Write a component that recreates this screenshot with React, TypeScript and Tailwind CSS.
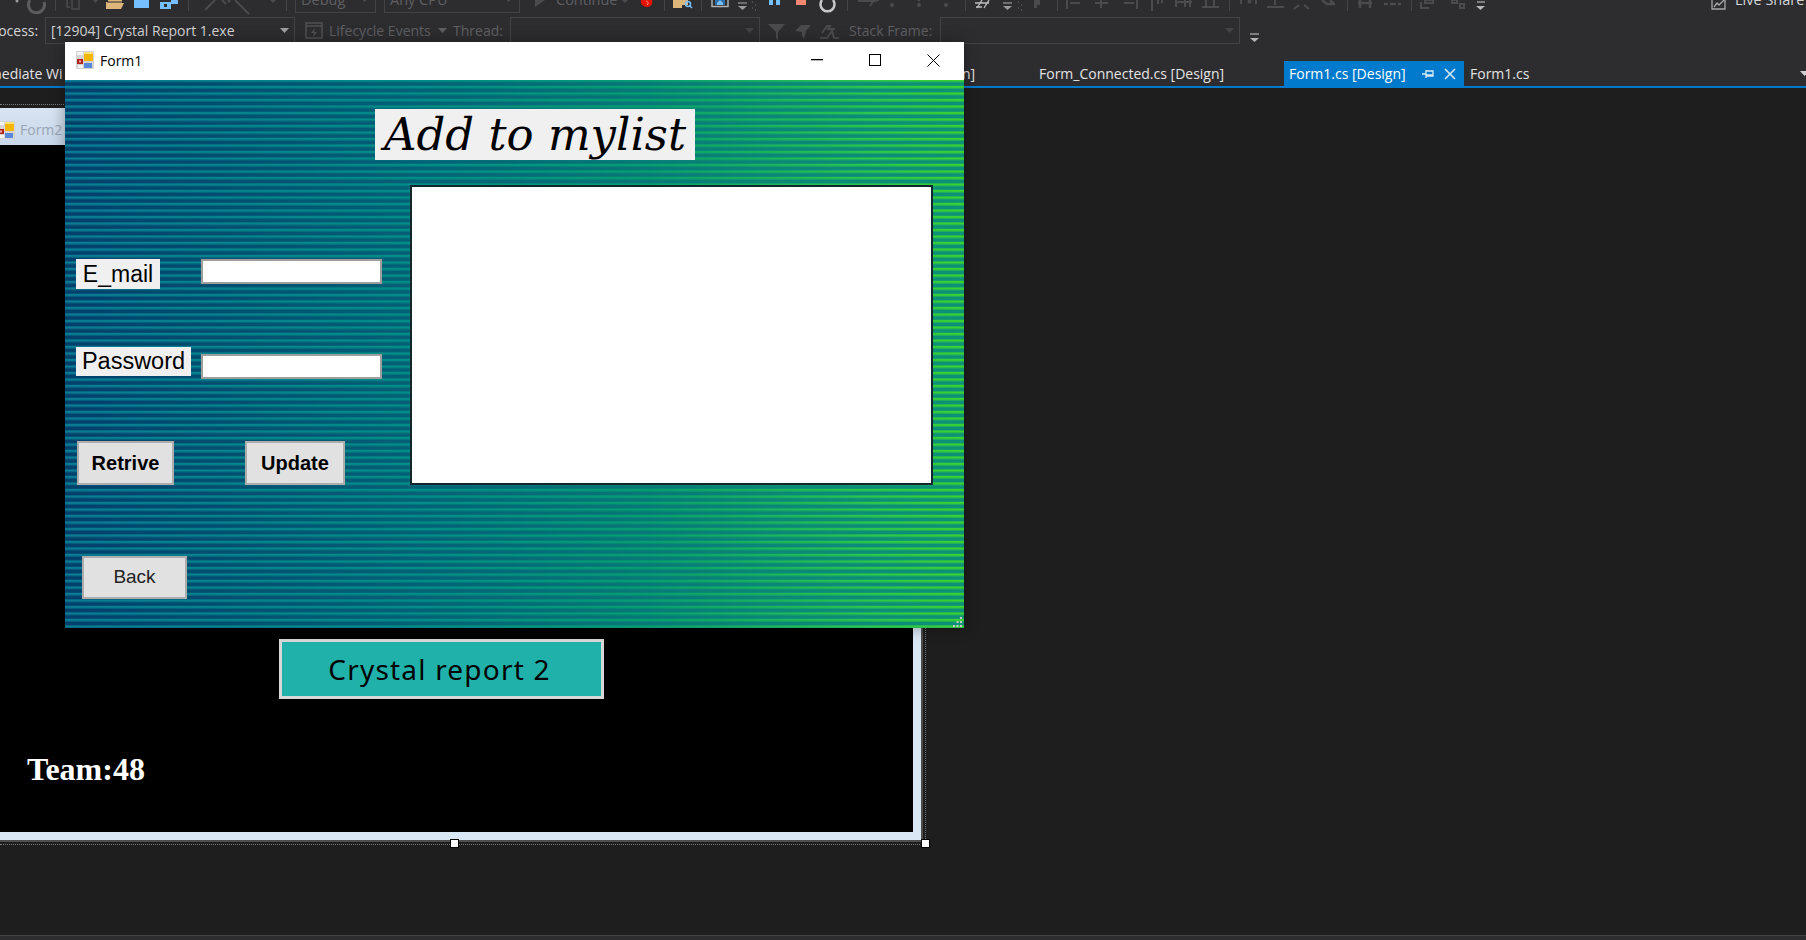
import React from 'react'

function FormIcon({ className }: { className?: string }) {
  return (
    <svg viewBox="0 0 18 18" className={className}>
      <rect width="18" height="18" fill="#d4d4d4" />
      <rect x="1" y="1" width="6" height="3" fill="#f4f4f4" />
      <rect x="1" y="8" width="6" height="5" fill="#b3201c" />
      <rect x="3" y="9.5" width="2" height="2" fill="#e9b0a0" />
      <rect x="8" y="1" width="9" height="9" fill="#f2b707" />
      <rect x="8" y="1" width="9" height="2" fill="#fde27a" />
      <rect x="8" y="12" width="8" height="5" fill="#5a88d8" />
      <rect x="2" y="14" width="5" height="3" fill="#f4f4f4" />
    </svg>
  )
}

function Caret({ color = '#9a9a9a', className = '' }: { color?: string; className?: string }) {
  return (
    <svg width="9" height="5" viewBox="0 0 9 5" className={className}>
      <path d="M0 0h9L4.5 5z" fill={color} />
    </svg>
  )
}

function DropBox({ width, caret, children }: { width: string; caret: string; children?: React.ReactNode }) {
  return (
    <div className={`flex h-[27px] items-center justify-between border border-[#434346] pl-[5px] pr-[5px] ${width}`}>
      <span className="text-[14px] leading-none whitespace-nowrap text-[#d4d4d4]">{children}</span>
      <Caret color={caret} />
    </div>
  )
}

function ToolbarTop() {
  const dim = '#4b4b4e'
  const sep = '#454548'
  return (
    <div className="flex h-[15px] items-start overflow-hidden">
      <svg width="295" height="15" viewBox="0 0 295 15" className="shrink-0">
        <circle cx="17" cy="1" r="1.5" fill="#9a9a9a" />
        <path d="M30 0a8 8 0 1 0 14 2" fill="none" stroke="#5c5c5f" strokeWidth="3" />
        <path d="M33 3l3 3 6-6" fill="none" stroke="#2d2d30" strokeWidth="2" />
        <rect x="55" y="0" width="1" height="11" fill={sep} />
        <path d="M67 0v7h3M72 0v9h7V0" fill="none" stroke={dim} strokeWidth="1.5" />
        <path d="M93 0h5l-2.500 3z" fill={dim} />
        <path d="M106 2h2V0h14v3h2l-3 6h-15z" fill="#dcb67a" />
        <path d="M107 2h16" stroke="#2d2d30" strokeWidth="1" />
        <rect x="134" y="0" width="15" height="8" fill="#75beff" />
        <rect x="160" y="2" width="11" height="7" fill="#75beff" />
        <rect x="171" y="0" width="7" height="4" fill="#75beff" />
        <rect x="164" y="4" width="3" height="3" fill="#2d2d30" />
        <rect x="188" y="0" width="1" height="11" fill={sep} />
        <path d="M205 10l10-10M222 0l4 4M235 0l14 14" fill="none" stroke={dim} strokeWidth="2" />
        <circle cx="229" cy="1" r="1.500" fill={dim} />
        <path d="M270 0h6l-3 3z" fill={dim} />
        <rect x="286" y="0" width="1" height="11" fill={sep} />
      </svg>
      <div className="-mt-[14px] flex h-[27px] w-[81px] shrink-0 items-center justify-between border border-[#434346] pl-[5px] pr-[6px] text-[14.500px] text-[#5f5f62]">
        Debug
        <Caret color="#4b4b4e" />
      </div>
      <div className="-mt-[14px] ml-[8px] flex h-[27px] w-[136px] shrink-0 items-center justify-between border border-[#434346] pl-[5px] pr-[6px] text-[14.500px] text-[#5f5f62]">
        Any CPU
        <Caret color="#4b4b4e" />
      </div>
      <svg width="20" height="15" viewBox="0 0 20 15" className="ml-[15px] shrink-0">
        <path d="M0 0h10L0 7z" fill={dim} />
      </svg>
      <span className="-mt-[14px] ml-[1px] h-[27px] w-[64px] shrink-0 text-[14.500px] leading-[27px] text-[#5f5f62]">Continue</span>
      <svg width="880" height="15" viewBox="620 0 880 15" className="shrink-0">
        <path d="M622 0h6l-3 3z" fill={dim} />
        <path d="M641 0h11c1 4-1 7-5 7s-7-3-6-7z" fill="#e51400" />
        <path d="M646 1c2 1 3 2 1 4" fill="none" stroke="#f6a6a0" />
        <rect x="664" y="0" width="1" height="11" fill={sep} />
        <path d="M673 0h15v5h-6v3h-9z" fill="#dcb67a" />
        <circle cx="688" cy="4" r="2.500" fill="none" stroke="#75beff" strokeWidth="1.500" />
        <path d="M690 6l2 2" stroke="#75beff" strokeWidth="1.500" />
        <rect x="701" y="0" width="1" height="11" fill={sep} />
        <path d="M712 0v6.500h16V0" fill="none" stroke="#b0b0b0" strokeWidth="1.500" />
        <path d="M715 0h10v5h-10z" fill="#2d6fa8" />
        <path d="M717 3l3-3 3 3v2h-6z" fill="#75beff" />
        <path d="M738 3h9" stroke="#9a9a9a" strokeWidth="1.200" />
        <path d="M738 6h9l-4.500 4z" fill="#9a9a9a" />
        <path d="M752 2h1M755 5h1M752 8h1M755 10h1" stroke="#5a5a5d" strokeWidth="1.500" />
        <rect x="769" y="0" width="4" height="5" fill="#75beff" />
        <rect x="776" y="0" width="4" height="5" fill="#75beff" />
        <rect x="796" y="0" width="10" height="5" fill="#f48771" />
        <path d="M822 0a7 7 0 1 0 11 0" fill="none" stroke="#c8c8c8" strokeWidth="2.500" />
        <rect x="847" y="0" width="1" height="11" fill={sep} />
        <path d="M858 1h16l5-1M874 0l-4 6" fill="none" stroke={dim} strokeWidth="2" />
        <circle cx="892" cy="5" r="2" fill={dim} />
        <circle cx="919" cy="5" r="2" fill={dim} />
        <circle cx="919" cy="0" r="1.500" fill={dim} />
        <circle cx="946" cy="5" r="2" fill={dim} />
        <rect x="965" y="0" width="1" height="11" fill={sep} />
        <path d="M977 8l5-8M984 8l5-8M975 3h14M976 7h6" fill="none" stroke="#bdbdbd" strokeWidth="1.300" />
        <path d="M1003 3h9" stroke="#9a9a9a" strokeWidth="1.200" />
        <path d="M1003 6h9l-4.500 4z" fill="#9a9a9a" />
        <path d="M1018 2h1M1021 5h1M1018 8h1M1021 10h1" stroke="#5a5a5d" strokeWidth="1.500" />
        <path d="M1034 0h6v5h-3v3h-3z" fill={dim} />
        <rect x="1057" y="0" width="1" height="11" fill={sep} />
        <path d="M1067 0v9M1070 3h10M1095 3h13M1101 0v8M1124 3h10M1137 0v9" fill="none" stroke={dim} strokeWidth="2" />
        <path d="M1152 0v11M1158 0v4M1162 0v3M1176 0v7M1185 0v7M1190 0v7M1175 2h17M1202 7h17M1206 0v6M1214 0v6" fill="none" stroke={dim} strokeWidth="2" />
        <rect x="1229" y="0" width="1" height="11" fill={sep} />
        <path d="M1241 0v4M1256 0v4M1248 0l3 3M1251 0l-3 3M1267 7h17M1275 0v5M1294 9l5-4M1309 9l-5-4" fill="none" stroke={dim} strokeWidth="2" />
        <path d="M1322 0l5 4h8M1330 0l4 4" fill="none" stroke={dim} strokeWidth="2.500" />
        <rect x="1347" y="0" width="1" height="11" fill={sep} />
        <path d="M1360 0v8M1370 0v8M1358 3h14M1384 4h4M1390 4h6M1398 4h3" fill="none" stroke={dim} strokeWidth="2.500" />
        <rect x="1411" y="0" width="1" height="11" fill={sep} />
        <path d="M1421 2v6h8M1425 0h8v3h-8z" fill="none" stroke={dim} strokeWidth="2" />
        <path d="M1452 0h5v3h-5zM1460 4h4v4h-4z" fill="none" stroke={dim} strokeWidth="2" />
        <path d="M1477 2h8" stroke="#b5b5b5" strokeWidth="1.200" />
        <path d="M1476 6h9l-4.500 4z" fill="#b5b5b5" />
      </svg>
      <svg width="15" height="10" viewBox="0 0 15 10" className="ml-[211px] shrink-0">
        <path d="M1 0v9h13V0M3 7l3-4 2 2 5-5" fill="none" stroke="#a8a8a8" strokeWidth="1.300" />
      </svg>
      <span className="-mt-[14px] ml-[9px] h-[27px] shrink-0 text-[14.500px] leading-[27px] whitespace-nowrap text-[#d4d4d4]">Live Share</span>
    </div>
  )
}

function ToolbarDebug() {
  return (
    <div className="mt-[2px] flex h-[44px] items-start text-[14px] text-[#5f5f62]">
      <span className="-ml-[16px] flex h-[27px] w-[61px] shrink-0 items-center text-[#d4d4d4]">Process:</span>
      <DropBox width="w-[250px] shrink-0" caret="#a0a0a0">[12904] Crystal Report 1.exe</DropBox>
      <svg width="18" height="17" viewBox="0 0 18 17" className="ml-[10px] mt-[5px] shrink-0">
        <path d="M1 1h16v15H1zM1 4h16" fill="none" stroke="#515154" strokeWidth="1.500" />
        <path d="M10 6l-4 5h3l-1 4 4-5H9z" fill="#515154" />
      </svg>
      <span className="ml-[6px] flex h-[27px] w-[103px] shrink-0 items-center whitespace-nowrap">Lifecycle Events</span>
      <Caret color="#5f5f62" className="ml-[6px] mt-[11px] shrink-0" />
      <span className="ml-[6px] flex h-[27px] w-[50px] shrink-0 items-center">Thread:</span>
      <div className="ml-[7px] shrink-0">
        <DropBox width="w-[250px]" caret="#434346" />
      </div>
      <svg width="72" height="17" viewBox="0 0 72 17" className="ml-[8px] mt-[7px] shrink-0">
        <path d="M0 0h17l-7 8v9L8 14V8z" fill="#4b4b4e" />
        <path d="M27 7l6-6h10l-5 6-2 8-2-3v-4z" fill="#4b4b4e" />
        <path d="M54 9l5-7h3l-2 3h7M52 14h7l5-7 2 7h5" fill="none" stroke="#4b4b4e" strokeWidth="2" />
      </svg>
      <span className="ml-[9px] flex h-[27px] w-[83px] shrink-0 items-center whitespace-nowrap">Stack Frame:</span>
      <div className="ml-[8px] shrink-0">
        <DropBox width="w-[300px]" caret="#434346" />
      </div>
      <svg width="9" height="9" viewBox="0 0 9 9" className="ml-[10px] mt-[16px] shrink-0">
        <path d="M0 1h9" stroke="#b5b5b5" strokeWidth="1.200" />
        <path d="M0 5h9L4.500 9z" fill="#b5b5b5" />
      </svg>
    </div>
  )
}

function TabStrip() {
  return (
    <div className="flex h-[27px] items-start border-b-2 border-[#007acc] text-[14px] leading-[25px]">
      <span className="-ml-[28px] w-[93px] shrink-0 whitespace-nowrap text-[#e4e4e4]">Immediate Wi</span>
      <span className="ml-[897px] w-[77px] shrink-0 text-[#e4e4e4]">n]</span>
      <span className="w-[245px] shrink-0 whitespace-nowrap text-[#e4e4e4]">Form_Connected.cs [Design]</span>
      <div className="flex h-[27px] w-[180px] shrink-0 items-start bg-[#007acc] pl-[5px] text-white">
        <span className="w-[133px] whitespace-nowrap">Form1.cs [Design]</span>
        <svg width="12" height="10" viewBox="0 0 12 10" className="mt-[8px]">
          <path d="M0 5h4M4 1v8M4 2h7v5H4M4 6h7" fill="none" stroke="#d8ecf8" strokeWidth="1.300" />
        </svg>
        <svg width="12" height="12" viewBox="0 0 12 12" className="ml-[10px] mt-[7px]">
          <path d="M1 1l10 10M11 1L1 11" stroke="#d8ecf8" strokeWidth="1.500" />
        </svg>
      </div>
      <span className="ml-[6px] shrink-0 text-[#e4e4e4]">Form1.cs</span>
      <Caret color="#d0d0d0" className="ml-auto mr-[-3px] mt-[10px] shrink-0" />
    </div>
  )
}

function Form1Window() {
  return (
    <div className="absolute left-[65px] top-[42px] flex h-[586px] w-[899px] flex-col shadow-[0_0_14px_rgba(0,0,0,0.35)]">
      <div className="flex h-[38px] shrink-0 items-center bg-white pb-[2px] pl-[11px] text-black">
        <FormIcon className="h-[18px] w-[18px]" />
        <span className="ml-[6px] w-[42px] text-[14px]">Form1</span>
        <svg width="12" height="2" viewBox="0 0 12 2" className="ml-[669px]">
          <rect width="12" height="1.300" fill="#000" />
        </svg>
        <svg width="12" height="12" viewBox="0 0 12 12" className="ml-[46px]">
          <rect x="0.500" y="0.500" width="11" height="11" fill="none" stroke="#000" />
        </svg>
        <svg width="13" height="13" viewBox="0 0 13 13" className="ml-[46px]">
          <path d="M0.500 0.500l12 12M12.500 0.500l-12 12" stroke="#000" />
        </svg>
      </div>
      <div className="relative flex-1 bg-[linear-gradient(90deg,#0a7c93_0%,#008f88_40%,#06a070_65%,#2cc84c_90%,#3ad232_100%)] before:absolute before:inset-0 before:bg-[linear-gradient(90deg,#02406c_0%,#056a78_50%,#0b8878_80%,#0c9278_100%)] before:content-[''] before:[mask-image:repeating-linear-gradient(180deg,transparent_0,transparent_0.8px,black_3px,black_5.2px,transparent_6.5px)]">
        <div className="relative flex flex-col pt-[29px] [font-family:'Liberation_Sans',sans-serif] text-black">
          <div className="ml-[310px] flex h-[51px] w-[320px] items-center justify-center overflow-hidden whitespace-nowrap bg-[#f0f0f0] [font-family:'DejaVu_Serif',serif] text-[45px] italic leading-none">
            Add to mylist
          </div>
          <div className="mt-[25px] flex">
            <div className="flex w-[345px] shrink-0 flex-col">
              <div className="mt-[74px] flex items-start">
                <div className="ml-[11px] flex h-[30px] w-[84px] items-center justify-center bg-[#f0f0f0] pt-[1px] text-[23px] leading-none">E_mail</div>
                <div className="ml-[41px] h-[25px] w-[181px] border-2 border-[#9e9e9e] bg-white" />
              </div>
              <div className="mt-[58px] flex items-start">
                <div className="ml-[11px] flex h-[29px] w-[115px] items-center justify-center bg-[#f0f0f0] text-[23.500px] leading-none">Password</div>
                <div className="ml-[10px] mt-[7px] h-[25px] w-[181px] border-2 border-[#9e9e9e] bg-white" />
              </div>
              <div className="mt-[62px] flex items-start">
                <button className="ml-[12px] h-[44px] w-[97px] border-2 border-[#adadad] bg-[#e1e1e1] text-[20px] font-bold">Retrive</button>
                <button className="ml-[71px] h-[44px] w-[100px] border-2 border-[#adadad] bg-[#e1e1e1] text-[20px] font-bold">Update</button>
              </div>
            </div>
            <div className="h-[300px] w-[523px] shrink-0 border-2 border-[#10282c] bg-white" />
          </div>
          <button className="ml-[17px] mt-[71px] h-[43px] w-[105px] border-2 border-[#adadad] bg-[#e1e1e1] text-[19px] text-[#222]">Back</button>
        </div>
        <svg width="10" height="10" viewBox="0 0 10 10" className="absolute bottom-[1px] right-[1px]">
          <path d="M7 0h2v2H7zM3.500 4h2v2h-2zM7 4h2v2H7zM0 8h2v2H0zM3.500 8h2v2h-2zM7 8h2v2H7z" fill="#c8c8c8" />
        </svg>
      </div>
    </div>
  )
}

export default function App() {
  return (
    <div className="relative flex h-[940px] w-[1806px] flex-col overflow-hidden bg-[#1e1e1e] [font-family:'Open_Sans',sans-serif]">
      <header className="h-[88px] shrink-0 bg-[#2d2d30]">
        <ToolbarTop />
        <ToolbarDebug />
        <TabStrip />
      </header>

      {/* designer surface */}
      <main className="relative flex-1">
        <div className="mt-[16px] w-[926px] border-r border-b border-t border-dotted border-[#7a7a7a] pr-[2px] pb-[2px] pt-[3px]">
          <div className="border-r-2 border-b-2 border-[#4e4e50]">
            <div className="border-r-[8px] border-b-[8px] border-[#d9e6f3]">
              <div className="flex h-[37px] items-center bg-[linear-gradient(180deg,#d8e4f2,#c8d7ea)] pt-[6px] text-[14px] text-[#9aa5b5]">
                <FormIcon className="-ml-[3px] h-[18px] w-[18px]" />
                <span className="ml-[5px]">Form2</span>
              </div>
              <div className="flex h-[687px] flex-col items-start bg-black pt-[494px]">
                <button className="ml-[279px] flex h-[60px] w-[325px] items-center justify-center border-[3px] border-[#d8d8d8] bg-[#20b2aa] pr-[4px] [font-family:'Noto_Sans',sans-serif] text-[28px] tracking-[1.2px] text-black">
                  Crystal report 2
                </button>
                <span className="ml-[27px] mt-[50px] [font-family:'Liberation_Serif',serif] text-[32px] font-bold leading-[40px] text-white">Team:48</span>
              </div>
            </div>
          </div>
        </div>
        <div className="absolute left-[451px] top-[752px] h-[7px] w-[7px] bg-white outline outline-1 outline-black" />
        <div className="absolute left-[922px] top-[752px] h-[7px] w-[7px] bg-white outline outline-1 outline-black" />
      </main>

      <footer className="h-[5px] shrink-0 border-t border-[#434346] bg-[#2d2d30]" />

      <Form1Window />
    </div>
  )
}
